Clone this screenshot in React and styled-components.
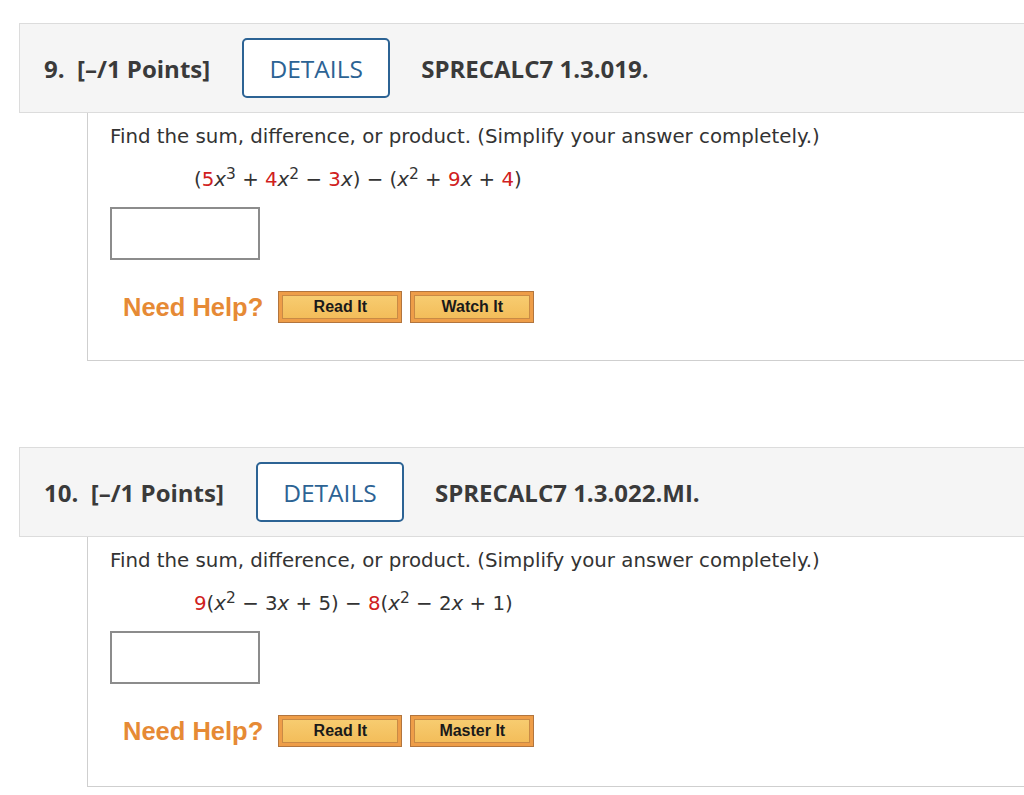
import React from "react";
import styled, { createGlobalStyle } from "styled-components";

const GlobalStyle = createGlobalStyle`
  html, body {
    margin: 0;
    padding: 0;
    background: #fff;
    overflow: hidden;
  }
`;

const Page = styled.div`
  width: 1024px;
  height: 795px;
  padding: 23px 0 0 19px;
  box-sizing: border-box;
  display: flex;
  flex-direction: column;
  gap: 86px;
`;

const Question = styled.div`
  display: flex;
  flex-direction: column;
`;

const Header = styled.div`
  display: flex;
  align-items: center;
  height: 88px;
  background: #f5f5f5;
  border: 1px solid #dcdcdc;
  border-right: none;
  padding-left: 24px;
  font-family: "Open Sans", sans-serif;
  color: #3a3a3a;
`;

const Number = styled.span`
  font-weight: 700;
  font-size: 24px;
  white-space: pre;
`;

const DetailsButton = styled.div`
  margin-left: 32px;
  width: 148px;
  height: 60px;
  box-sizing: border-box;
  border: 2px solid #2c6394;
  border-radius: 5px;
  display: flex;
  align-items: center;
  justify-content: center;
  color: #2c6394;
  font-size: 24.5px;
  font-weight: 400;
  background: #fff;
`;

const Code = styled.span`
  margin-left: 31px;
  font-weight: 700;
  font-size: 24px;
`;

const Body = styled.div`
  margin-left: 68px;
  border-left: 1px solid #cfcfcf;
  border-bottom: 1px solid #cfcfcf;
  padding: 12px 0 0 22px;
  height: ${(p) => p.$height}px;
  box-sizing: border-box;
  font-family: "DejaVu Sans", Verdana, sans-serif;
  color: #333;
`;

const Prompt = styled.div`
  font-size: 19.8px;
  line-height: 24px;
  white-space: nowrap;
`;

const Expression = styled.div`
  margin: 19px 0 0 84px;
  font-size: 19.8px;
  line-height: 24px;
  white-space: pre;
`;

const Red = styled.span`
  color: #d02020;
`;

const Var = styled.i`
  font-style: italic;
`;

const Sup = styled.sup`
  font-size: 0.78em;
  vertical-align: 0.45em;
  line-height: 0;
`;

const AnswerBox = styled.div`
  margin-top: 15px;
  width: 150px;
  height: 53px;
  box-sizing: border-box;
  border: 2px solid #8c8c8c;
  background: #fff;
`;

const HelpRow = styled.div`
  margin-top: 31px;
  margin-left: 13px;
  display: flex;
  align-items: center;
`;

const NeedHelp = styled.span`
  font-family: "Liberation Sans", Arial, sans-serif;
  font-weight: 700;
  font-size: 25.5px;
  color: #e68a35;
  margin-right: 15px;
`;

const HelpButton = styled.div`
  width: 124px;
  height: 32px;
  box-sizing: border-box;
  margin-right: 8px;
  border: 1px solid #b2753e;
  background: #ee9d48;
  padding: 3px;
  display: flex;
`;

const HelpInner = styled.div`
  flex: 1;
  border: 1px solid #c98a45;
  background: linear-gradient(#f7cc70, #f3bd5a);
  display: flex;
  align-items: center;
  justify-content: center;
  font-family: "Liberation Sans", Arial, sans-serif;
  font-weight: 700;
  font-size: 16px;
  color: #1a1a1a;
`;

function QuestionBlock({ num, code, expression, extra, bodyHeight }) {
  return (
    <Question>
      <Header>
        <Number>{`${num}.  [–/1 Points]`}</Number>
        <DetailsButton>DETAILS</DetailsButton>
        <Code>{code}</Code>
      </Header>
      <Body $height={bodyHeight}>
        <Prompt>Find the sum, difference, or product. (Simplify your answer completely.)</Prompt>
        <Expression>{expression}</Expression>
        <AnswerBox />
        <HelpRow>
          <NeedHelp>Need Help?</NeedHelp>
          <HelpButton>
            <HelpInner>Read It</HelpInner>
          </HelpButton>
          <HelpButton>
            <HelpInner>{extra}</HelpInner>
          </HelpButton>
        </HelpRow>
      </Body>
    </Question>
  );
}

export default function App() {
  const expr1 = (
    <>
      (<Red>5</Red><Var>x</Var><Sup>3</Sup> + <Red>4</Red><Var>x</Var><Sup>2</Sup> − <Red>3</Red><Var>x</Var>) − (<Var>x</Var><Sup>2</Sup> + <Red>9</Red><Var>x</Var> + <Red>4</Red>)
    </>
  );
  const expr2 = (
    <>
      <Red>9</Red>(<Var>x</Var><Sup>2</Sup> − 3<Var>x</Var> + 5) − <Red>8</Red>(<Var>x</Var><Sup>2</Sup> − 2<Var>x</Var> + 1)
    </>
  );
  return (
    <>
      <GlobalStyle />
      <Page>
        <QuestionBlock num="9" code="SPRECALC7 1.3.019." expression={expr1} extra="Watch It" bodyHeight={248} />
        <QuestionBlock num="10" code="SPRECALC7 1.3.022.MI." expression={expr2} extra="Master It" bodyHeight={250} />
      </Page>
    </>
  );
}
